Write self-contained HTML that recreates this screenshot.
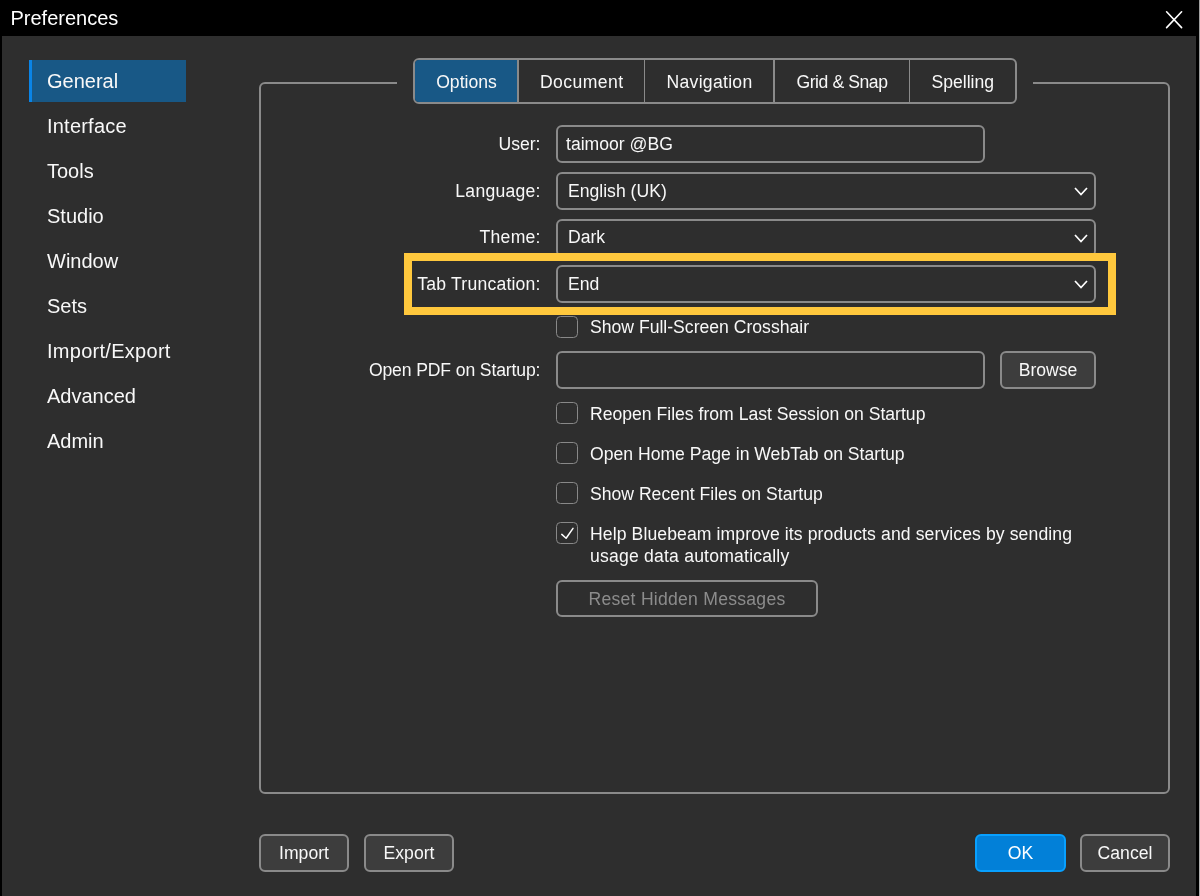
<!DOCTYPE html>
<html><head><meta charset="utf-8">
<style>
html,body{margin:0;padding:0;}
body{width:1200px;height:896px;background:#000;position:relative;overflow:hidden;will-change:transform;font-family:"Liberation Sans",sans-serif;color:#f8f8f8;}
.a{position:absolute;}
.t{position:absolute;white-space:nowrap;line-height:1;}
#title{left:10.5px;top:7.5px;font-size:20px;color:#fff;}
#panel{left:2px;top:36px;width:1194px;height:860px;background:#2e2e2e;}
.nav{position:absolute;left:47px;font-size:20px;color:#f8f8f8;}
#sel{left:29px;top:60px;width:157px;height:42px;background:#185886;}
#selacc{left:29px;top:60px;width:3px;height:42px;background:#0a84e6;}
#group{left:259px;top:82px;width:907px;height:708px;border:2px solid #8a8a8a;border-radius:6px;}
#gap{left:397px;top:78px;width:636px;height:8px;background:#2e2e2e;}
#tabs{left:413px;top:58px;width:600px;height:42px;border:2px solid #8a8a8a;border-radius:6px;background:#2e2e2e;overflow:hidden;}
.tab{position:absolute;top:1px;height:42px;font-size:17.6px;color:#f8f8f8;text-align:center;line-height:42px;}
.div{position:absolute;top:0;width:1.6px;height:42px;background:#8a8a8a;}
.lbl{position:absolute;font-size:17.6px;color:#f8f8f8;text-align:right;right:659.5px;line-height:1;}
.field{position:absolute;border:2px solid #8a8a8a;border-radius:6px;box-sizing:border-box;}
.ftxt{position:absolute;font-size:17.6px;color:#f8f8f8;line-height:1;white-space:nowrap;}
.cb{position:absolute;left:556px;width:22px;height:22px;box-sizing:border-box;border:1.7px solid #888;border-radius:4.5px;}
.cbt{position:absolute;left:590px;font-size:17.6px;color:#f8f8f8;line-height:1;white-space:nowrap;}
.btn{position:absolute;box-sizing:border-box;border:2px solid #8a8a8a;border-radius:6px;background:#3d3d3d;font-size:17.6px;color:#f8f8f8;text-align:center;}
.chev{position:absolute;width:14px;height:9px;}
#yel{left:404px;top:253px;width:696px;height:46px;border:8px solid #ffc83d;}
</style></head><body>
<div class="t" id="title">Preferences</div>
<svg class="a" style="left:1160px;top:5px" width="28" height="28" viewBox="0 0 28 28"><path d="M6.6 6.8 L21.6 22.6 M21.6 6.8 L6.6 22.6" stroke="#fff" stroke-width="1.6" stroke-linecap="round"/></svg>
<div class="a" id="panel"></div>
<div class="a" style="left:1199px;top:0;width:1px;height:896px;background:linear-gradient(#a0a0a0 0,#a0a0a0 150px,#e8e8e8 150px,#e8e8e8 660px,#b0b0b0 660px)"></div>

<div class="a" id="sel"></div><div class="a" id="selacc"></div>
<div class="t nav" style="top:70.5px">General</div>
<div class="t nav" style="top:115.5px;letter-spacing:0.22px">Interface</div>
<div class="t nav" style="top:160.5px">Tools</div>
<div class="t nav" style="top:205.5px">Studio</div>
<div class="t nav" style="top:250.5px">Window</div>
<div class="t nav" style="top:295.5px">Sets</div>
<div class="t nav" style="top:340.5px;letter-spacing:0.28px">Import/Export</div>
<div class="t nav" style="top:385.5px">Advanced</div>
<div class="t nav" style="top:430.5px">Admin</div>

<div class="a" id="group"></div>
<div class="a" id="gap"></div>
<div class="a" id="tabs">
  <div class="a" style="left:0;top:0;width:102.5px;height:42px;background:#185886"></div>
  <div class="tab" style="left:0;width:103px">Options</div>
  <div class="div" style="left:102.4px"></div>
  <div class="tab" style="left:104px;width:125.5px;letter-spacing:0.43px">Document</div>
  <div class="div" style="left:228.7px"></div>
  <div class="tab" style="left:230.5px;width:128px;letter-spacing:0.29px">Navigation</div>
  <div class="div" style="left:358.2px"></div>
  <div class="tab" style="left:360px;width:134px;letter-spacing:-0.43px">Grid &amp; Snap</div>
  <div class="div" style="left:493.7px"></div>
  <div class="tab" style="left:495.5px;width:104.5px">Spelling</div>
</div>

<div class="lbl" style="top:136px">User:</div>
<div class="field" style="left:556px;top:125px;width:429px;height:38px"></div>
<div class="ftxt" style="left:566px;top:136px">taimoor @BG</div>

<div class="lbl" style="top:183px;letter-spacing:0.25px;margin-right:-0.25px">Language:</div>
<div class="field" style="left:556px;top:172px;width:540px;height:38px"></div>
<div class="ftxt" style="left:568px;top:183px">English (UK)</div>
<svg class="chev" style="left:1074px;top:187px" viewBox="0 0 14 9"><path d="M1 1 L7 7.5 L13 1" fill="none" stroke="#fff" stroke-width="1.7"/></svg>

<div class="lbl" style="top:229px;letter-spacing:0.26px;margin-right:-0.26px">Theme:</div>
<div class="field" style="left:556px;top:219px;width:540px;height:38px"></div>
<div class="ftxt" style="left:568px;top:229px">Dark</div>
<svg class="chev" style="left:1074px;top:234px" viewBox="0 0 14 9"><path d="M1 1 L7 7.5 L13 1" fill="none" stroke="#fff" stroke-width="1.7"/></svg>

<div class="lbl" style="top:276px;letter-spacing:0.21px;margin-right:-0.21px">Tab Truncation:</div>
<div class="field" style="left:556px;top:265px;width:540px;height:38px"></div>
<div class="ftxt" style="left:568px;top:276px">End</div>
<svg class="chev" style="left:1074px;top:280px" viewBox="0 0 14 9"><path d="M1 1 L7 7.5 L13 1" fill="none" stroke="#fff" stroke-width="1.7"/></svg>

<div class="cb" style="top:316px"></div>
<div class="cbt" style="top:319px">Show Full-Screen Crosshair</div>

<div class="lbl" style="top:362px;letter-spacing:-0.13px;margin-right:0.13px">Open PDF on Startup:</div>
<div class="field" style="left:556px;top:351px;width:429px;height:38px"></div>
<div class="btn" style="left:1000px;top:351px;width:96px;height:38px;line-height:34px">Browse</div>

<div class="cb" style="top:402px"></div>
<div class="cbt" style="top:406px">Reopen Files from Last Session on Startup</div>
<div class="cb" style="top:442px"></div>
<div class="cbt" style="top:446px">Open Home Page in WebTab on Startup</div>
<div class="cb" style="top:482px"></div>
<div class="cbt" style="top:486px">Show Recent Files on Startup</div>
<div class="cb" style="top:522px"></div>
<svg class="a" style="left:556px;top:522px" width="22" height="22" viewBox="0 0 22 22"><path d="M5.8 12.4 L10.1 16.3 L17 6.4" fill="none" stroke="#fff" stroke-width="1.5" stroke-linecap="round" stroke-linejoin="round"/></svg>
<div class="cbt" style="top:526px;letter-spacing:0.1px">Help Bluebeam improve its products and services by sending</div>
<div class="cbt" style="top:548px;letter-spacing:0.2px">usage data automatically</div>

<div class="btn" style="left:556px;top:580px;width:262px;height:37px;line-height:35px;background:#2e2e2e;color:#8c8c8c;letter-spacing:0.25px">Reset Hidden Messages</div>

<div class="btn" style="left:259px;top:834px;width:90px;height:38px;line-height:35px">Import</div>
<div class="btn" style="left:364px;top:834px;width:90px;height:38px;line-height:35px">Export</div>
<div class="btn" style="left:975px;top:834px;width:91px;height:38px;line-height:34px;background:#0280d8;border-color:#08a0ff;color:#fff">OK</div>
<div class="btn" style="left:1080px;top:834px;width:90px;height:38px;line-height:34px">Cancel</div>

<div class="a" id="yel"></div>
</body></html>
